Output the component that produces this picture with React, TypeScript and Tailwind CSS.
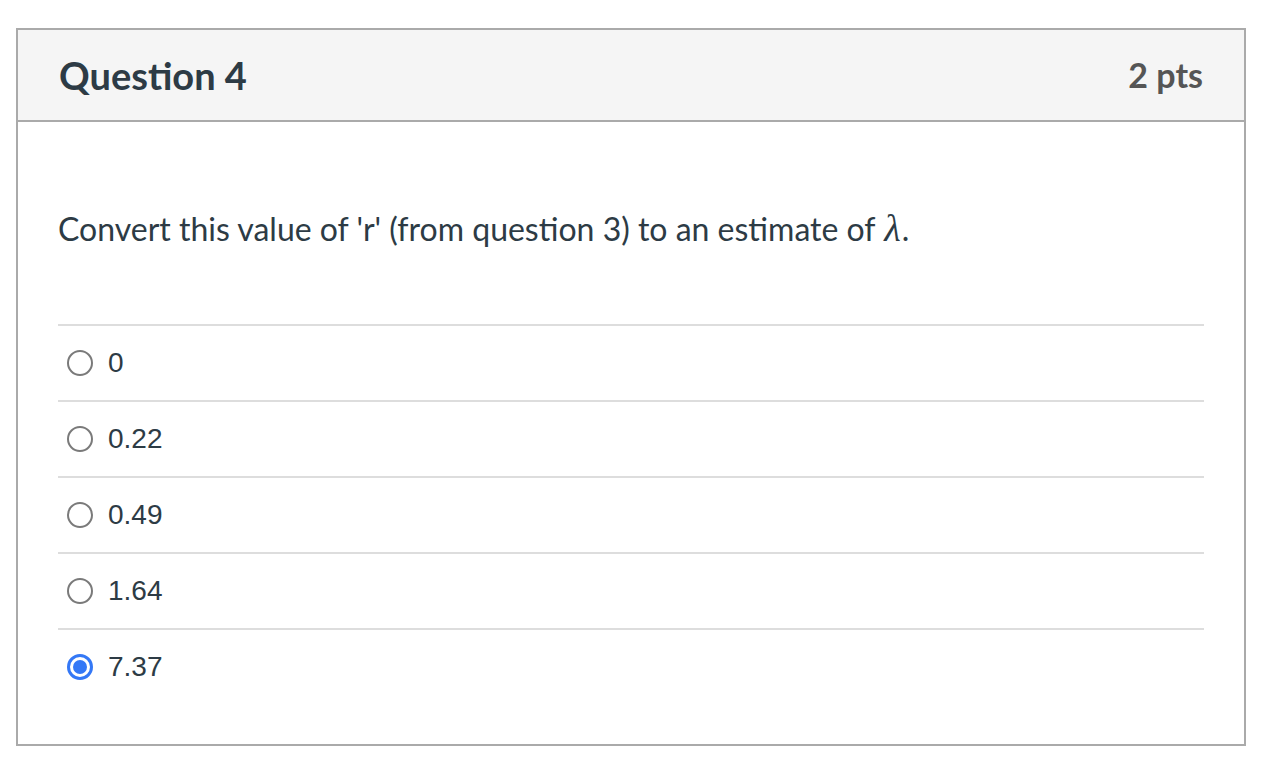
const options = ["0", "0.22", "0.49", "1.64", "7.37"];
const selected = "7.37";

function Radio({ checked }: { checked: boolean }) {
  if (checked) {
    return (
      <span className="flex h-[26px] w-[26px] shrink-0 items-center justify-center rounded-full border-[3px] border-[#3478f6] bg-white">
        <span className="h-[14px] w-[14px] rounded-full bg-[#3478f6]" />
      </span>
    );
  }
  return <span className="h-[26px] w-[26px] shrink-0 rounded-full border-2 border-[#7a7a7a] bg-white" />;
}

export default function App() {
  return (
    <div className="min-h-[778px] bg-white pl-[16px] pt-[28px] font-['Lato',sans-serif] text-[#2d3b45]">
      <div className="w-[1230px] border-2 border-[#aaaaaa]">
        <div className="flex h-[92px] items-center justify-between border-b-2 border-[#aaaaaa] bg-[#f5f5f5] px-[41px]">
          <h2 className="text-[38px] font-bold leading-none">Question 4</h2>
          <span className="text-[34px] font-bold leading-none text-[#555555]">2 pts</span>
        </div>
        <div className="px-[40px] pb-[40px] pt-[84px]">
          <p className="text-[32px] leading-[45px]">
            Convert this value of 'r' (from question 3) to an estimate of{" "}
            <span className="mx-[1px] font-['Liberation_Serif',serif] text-[38px] italic leading-none">λ</span>.
          </p>
          <div className="mt-[73px]">
            {options.map((opt) => (
              <label key={opt} className="flex h-[76px] items-center gap-[15px] border-t-2 border-[#dddddd] pl-[9px]">
                <Radio checked={opt === selected} />
                <span className="font-['Liberation_Sans',Arial,sans-serif] text-[28px] leading-none">{opt}</span>
              </label>
            ))}
          </div>
        </div>
      </div>
    </div>
  );
}
